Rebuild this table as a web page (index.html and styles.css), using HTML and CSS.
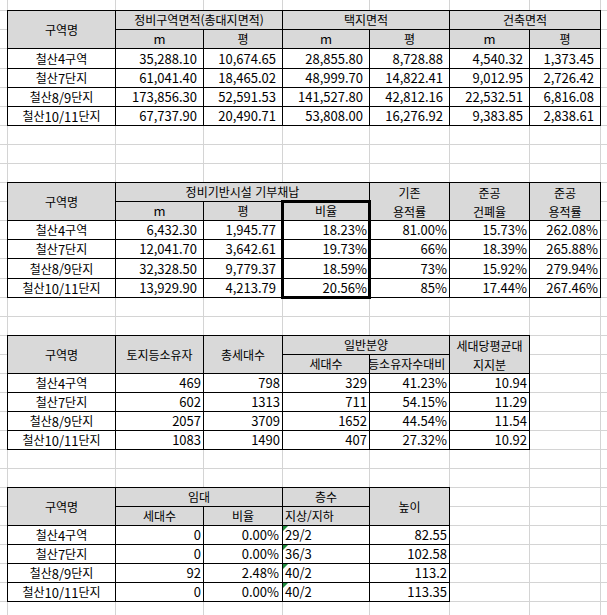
FILE: index.html
```html
<!DOCTYPE html>
<html lang="ko">
<head>
<meta charset="utf-8">
<title>철산 정비구역 현황</title>
<link rel="stylesheet" href="styles.css">
</head>
<body>
<main class="sheet">

  <section class="tbl t1">
    <div class="h c rs2">구역명</div>
    <div class="h c cs2">정비구역면적(총대지면적)</div>
    <div class="h c cs2">택지면적</div>
    <div class="h c cs2">건축면적</div>
    <div class="h c n">m</div>
    <div class="h c">평</div>
    <div class="h c n">m</div>
    <div class="h c">평</div>
    <div class="h c n">m</div>
    <div class="h c">평</div>

    <div class="c">철산<span class="d">4</span>구역</div>
    <div class="r a n">35,288.10</div>
    <div class="r a n">10,674.65</div>
    <div class="r a n">28,855.80</div>
    <div class="r a n">8,728.88</div>
    <div class="r a n">4,540.32</div>
    <div class="r a n">1,373.45</div>

    <div class="c">철산<span class="d">7</span>단지</div>
    <div class="r a n">61,041.40</div>
    <div class="r a n">18,465.02</div>
    <div class="r a n">48,999.70</div>
    <div class="r a n">14,822.41</div>
    <div class="r a n">9,012.95</div>
    <div class="r a n">2,726.42</div>

    <div class="c">철산<span class="d">8/9</span>단지</div>
    <div class="r a n">173,856.30</div>
    <div class="r a n">52,591.53</div>
    <div class="r a n">141,527.80</div>
    <div class="r a n">42,812.16</div>
    <div class="r a n">22,532.51</div>
    <div class="r a n">6,816.08</div>

    <div class="c">철산<span class="d">10/11</span>단지</div>
    <div class="r a n">67,737.90</div>
    <div class="r a n">20,490.71</div>
    <div class="r a n">53,808.00</div>
    <div class="r a n">16,276.92</div>
    <div class="r a n">9,383.85</div>
    <div class="r a n">2,838.61</div>
  </section>

  <section class="tbl t2">
    <div class="h c rs2">구역명</div>
    <div class="h c cs3">정비기반시설 기부채납</div>
    <div class="h c rs2"><span>기존<br>용적률</span></div>
    <div class="h c rs2"><span>준공<br>건폐율</span></div>
    <div class="h c rs2"><span>준공<br>용적률</span></div>
    <div class="h c n">m</div>
    <div class="h c">평</div>
    <div class="h c box">비율</div>

    <div class="c">철산<span class="d">4</span>구역</div>
    <div class="r a n">6,432.30</div>
    <div class="r a n">1,945.77</div>
    <div class="r n">18.23%</div>
    <div class="r n">81.00%</div>
    <div class="r n">15.73%</div>
    <div class="r n">262.08%</div>

    <div class="c">철산<span class="d">7</span>단지</div>
    <div class="r a n">12,041.70</div>
    <div class="r a n">3,642.61</div>
    <div class="r n">19.73%</div>
    <div class="r n">66%</div>
    <div class="r n">18.39%</div>
    <div class="r n">265.88%</div>

    <div class="c">철산<span class="d">8/9</span>단지</div>
    <div class="r a n">32,328.50</div>
    <div class="r a n">9,779.37</div>
    <div class="r n">18.59%</div>
    <div class="r n">73%</div>
    <div class="r n">15.92%</div>
    <div class="r n">279.94%</div>

    <div class="c">철산<span class="d">10/11</span>단지</div>
    <div class="r a n">13,929.90</div>
    <div class="r a n">4,213.79</div>
    <div class="r n">20.56%</div>
    <div class="r n">85%</div>
    <div class="r n">17.44%</div>
    <div class="r n">267.46%</div>
  </section>

  <section class="tbl t3">
    <div class="h c rs2">구역명</div>
    <div class="h c rs2">토지등소유자</div>
    <div class="h c rs2">총세대수</div>
    <div class="h c cs2">일반분양</div>
    <div class="h c rs2"><span>세대당평균대<br>지지분</span></div>
    <div class="h c">세대수</div>
    <div class="h clip"><span>토지등소유자수대비</span></div>

    <div class="c">철산<span class="d">4</span>구역</div>
    <div class="r n">469</div>
    <div class="r n">798</div>
    <div class="r n">329</div>
    <div class="r n">41.23%</div>
    <div class="r n">10.94</div>

    <div class="c">철산<span class="d">7</span>단지</div>
    <div class="r n">602</div>
    <div class="r n">1313</div>
    <div class="r n">711</div>
    <div class="r n">54.15%</div>
    <div class="r n">11.29</div>

    <div class="c">철산<span class="d">8/9</span>단지</div>
    <div class="r n">2057</div>
    <div class="r n">3709</div>
    <div class="r n">1652</div>
    <div class="r n">44.54%</div>
    <div class="r n">11.54</div>

    <div class="c">철산<span class="d">10/11</span>단지</div>
    <div class="r n">1083</div>
    <div class="r n">1490</div>
    <div class="r n">407</div>
    <div class="r n">27.32%</div>
    <div class="r n">10.92</div>
  </section>

  <section class="tbl t4">
    <div class="h c rs2">구역명</div>
    <div class="h c cs2">임대</div>
    <div class="h c">층수</div>
    <div class="h c rs2">높이</div>
    <div class="h c">세대수</div>
    <div class="h c">비율</div>
    <div class="h l">지상/지하</div>

    <div class="c">철산<span class="d">4</span>구역</div>
    <div class="r n">0</div>
    <div class="r n p3">0.00%</div>
    <div class="l n tri">29/2</div>
    <div class="r n">82.55</div>

    <div class="c">철산<span class="d">7</span>단지</div>
    <div class="r n">0</div>
    <div class="r n p3">0.00%</div>
    <div class="l n tri">36/3</div>
    <div class="r n">102.58</div>

    <div class="c">철산<span class="d">8/9</span>단지</div>
    <div class="r n">92</div>
    <div class="r n p3">2.48%</div>
    <div class="l n tri">40/2</div>
    <div class="r n">113.2</div>

    <div class="c">철산<span class="d">10/11</span>단지</div>
    <div class="r n">0</div>
    <div class="r n p3">0.00%</div>
    <div class="l n tri">40/2</div>
    <div class="r n">113.35</div>
  </section>

</main>
</body>
</html>
```

FILE: styles.css
```css
:root {
  --grid: #d4d4d4;
  --head: #d9d9d9;
}

html, body {
  margin: 0;
  padding: 0;
  background: #fff;
}

body {
  width: 607px;
  height: 615px;
  overflow: hidden;
  font-family: "Noto Sans CJK KR", "Noto Sans", sans-serif;
  color: #000;
}

/* worksheet: columns and rows of the spreadsheet, gridlines drawn behind */
.sheet {
  display: grid;
  grid-template-columns: 7px 107px 87px 78px 86px 79px 79px 70px 40px;
  grid-template-rows: 10px 18px 18px 19px repeat(10, 18px) 19px repeat(17, 18px) 20px;
  gap: 1px;
  width: 607px;
  height: 615px;
  background:
    linear-gradient(var(--grid), var(--grid)) 7px 0 / 1px 100% no-repeat,
    linear-gradient(var(--grid), var(--grid)) 115px 0 / 1px 100% no-repeat,
    linear-gradient(var(--grid), var(--grid)) 203px 0 / 1px 100% no-repeat,
    linear-gradient(var(--grid), var(--grid)) 282px 0 / 1px 100% no-repeat,
    linear-gradient(var(--grid), var(--grid)) 369px 0 / 1px 100% no-repeat,
    linear-gradient(var(--grid), var(--grid)) 449px 0 / 1px 100% no-repeat,
    linear-gradient(var(--grid), var(--grid)) 529px 0 / 1px 100% no-repeat,
    linear-gradient(var(--grid), var(--grid)) 600px 0 / 1px 100% no-repeat,
    repeating-linear-gradient(to bottom, var(--grid) 0 1px, transparent 1px 19px) 0 10px / 100% 57px no-repeat,
    repeating-linear-gradient(to bottom, var(--grid) 0 1px, transparent 1px 19px) 0 68px / 100% 191px no-repeat,
    repeating-linear-gradient(to bottom, var(--grid) 0 1px, transparent 1px 19px) 0 278px / 100% 343px no-repeat,
    #fff;
}

/* bordered tables */
.tbl {
  display: grid;
  gap: 1px;
  background: #000;
  outline: 1px solid #000;
}

.t1 {
  grid-column: 2 / 9;
  grid-row: 2 / 8;
  grid-template-columns: 107px 87px 78px 86px 79px 79px 70px;
  grid-template-rows: 18px 18px 19px 18px 18px 18px;
}

.t2 {
  grid-column: 2 / 9;
  grid-row: 11 / 17;
  grid-template-columns: 107px 87px 78px 86px 79px 79px 70px;
  grid-template-rows: 18px 18px 18px 18px 19px 18px;
}

.t3 {
  grid-column: 2 / 8;
  grid-row: 19 / 25;
  grid-template-columns: 107px 87px 78px 86px 79px 79px;
  grid-template-rows: repeat(6, 18px);
}

.t4 {
  grid-column: 2 / 7;
  grid-row: 27 / 33;
  grid-template-columns: 107px 87px 78px 86px 79px;
  grid-template-rows: repeat(6, 18px);
}

.tbl > div {
  display: flex;
  align-items: center;
  background: #fff;
  overflow: hidden;
  white-space: nowrap;
  font-size: 12px;
  line-height: 18px;
}

.tbl > .h { background: var(--head); }

.rs2 { grid-row: span 2; }
.cs2 { grid-column: span 2; }
.cs3 { grid-column: span 3; }

.c { justify-content: center; text-align: center; }
.c > span { line-height: 19px; }
.r { justify-content: flex-end; padding-right: 2px; }
.r.a { padding-right: 6px; }
.r.p3 { padding-right: 3px; }
.l { justify-content: flex-start; padding-left: 2px; }

/* header text wider than its cell: Excel clips it at both cell edges */
.clip { justify-content: flex-start; }
.clip > span { flex: none; margin-left: -24px; }

.tbl > .n, .d { font-size: 13px; }

/* thick box around the 비율 column */
.tbl > .box {
  position: relative;
  overflow: visible;
}
.box::after {
  content: "";
  position: absolute;
  left: -2px;
  right: -2px;
  top: -2px;
  height: 99px;
  border: 3px solid #000;
  box-sizing: border-box;
  pointer-events: none;
}

/* Excel "number stored as text" marker */
.tri { position: relative; }
.tri::before {
  content: "";
  position: absolute;
  left: 0;
  top: 0;
  border-top: 5px solid #1e8a3c;
  border-right: 5px solid transparent;
}
```
